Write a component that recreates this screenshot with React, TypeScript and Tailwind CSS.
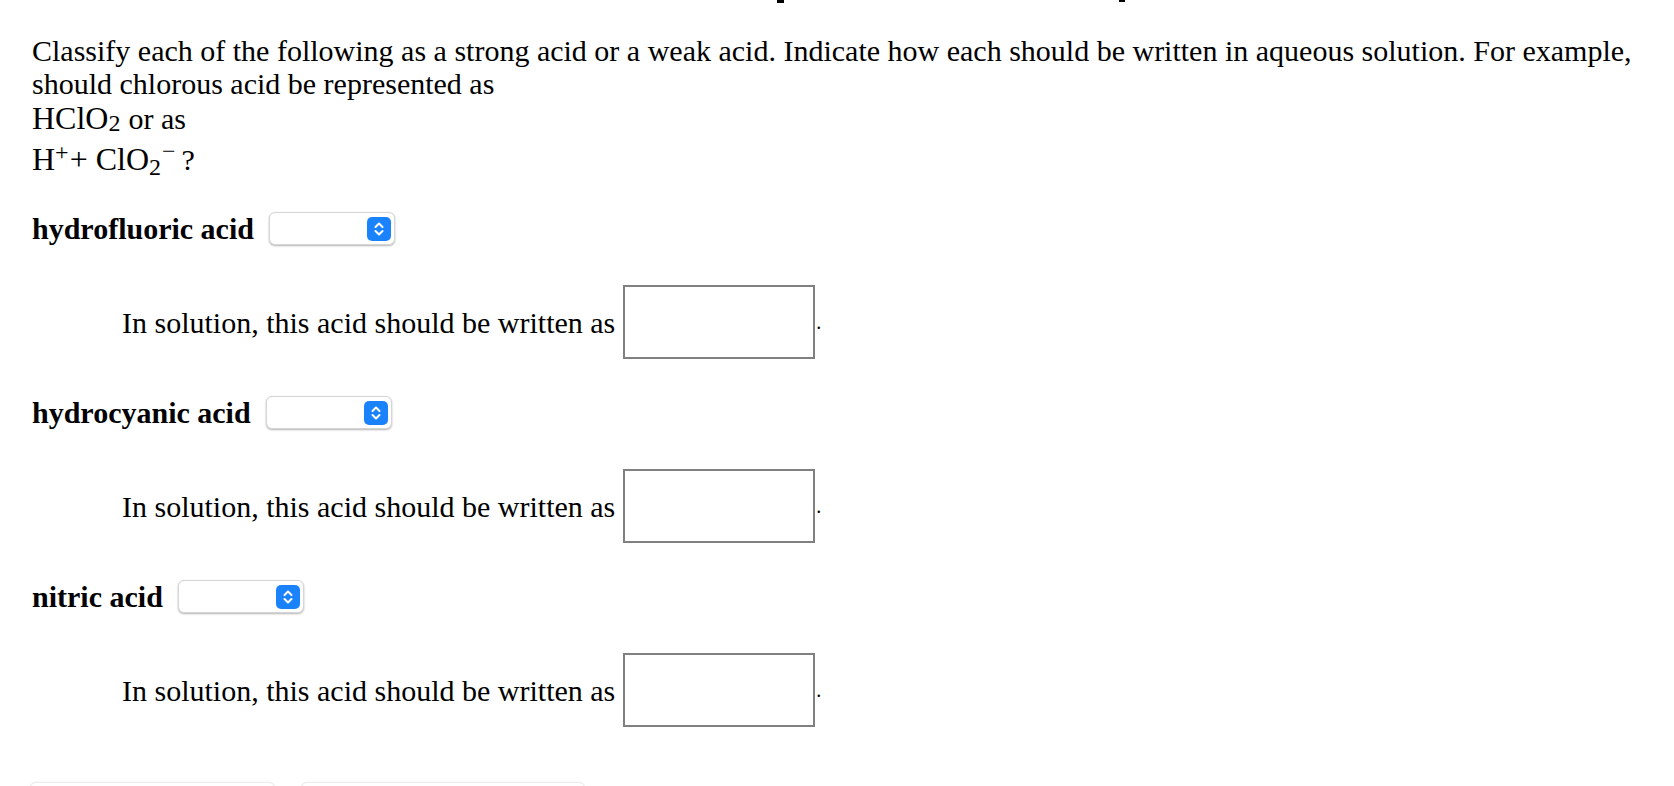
import * as React from 'react';

const acids = ['hydrofluoric acid', 'hydrocyanic acid', 'nitric acid'];

// select in the macOS style: white pill with a blue stepper button
const FakeSelect: React.FC = () => (
  <div className="relative h-[33px] w-[126px] rounded-[6px] border border-[#d6d6d6] bg-white shadow-[0_1px_2px_rgba(0,0,0,0.3)]">
    <div className="absolute right-[3px] top-[4px] flex h-[24px] w-[24px] items-center justify-center rounded-[5px] bg-[#1a82fb]">
      <svg width="12" height="16" viewBox="0 0 12 16" fill="none">
        <path d="M2.5 6 L6 2.5 L9.5 6" stroke="white" strokeWidth="2" strokeLinecap="round" strokeLinejoin="round" />
        <path d="M2.5 10 L6 13.5 L9.5 10" stroke="white" strokeWidth="2" strokeLinecap="round" strokeLinejoin="round" />
      </svg>
    </div>
  </div>
);

const App: React.FC = () => {
  return (
    <div className="relative min-h-[786px] overflow-hidden bg-white font-['Liberation_Serif','Times_New_Roman',serif] text-[30px] text-black">
      {/* bits of the line above that got cut off */}
      <div className="absolute left-[777px] top-0 h-[3px] w-[7px] bg-black" />
      <div className="absolute left-[1119px] top-0 h-[2px] w-[6px] bg-black" />

      <div className="pl-[32px] pt-[34px]">
        <p className="leading-[33px]">
          Classify each of the following as a strong acid or a weak acid. Indicate how each should be written in aqueous solution. For example,
          <br />
          should chlorous acid be represented as
        </p>
        <p className="mt-[1px] text-[32px] leading-[35px]">
          HClO<sub className="relative top-[2px] align-baseline text-[24px]">2</sub>
          <span className="ml-[8px] text-[30px]">or as</span>
        </p>
        <p className="mt-[4px] text-[32px] leading-[38px]">
          H<sup className="relative -top-[10px] align-baseline text-[24px]">+</sup>
          <span className="ml-[1px]">+</span>
          <span className="ml-[8px]">ClO</span>
          <sub className="relative top-[5px] align-baseline text-[24px]">2</sub>
          <sup className="relative -top-[11px] ml-[1px] align-baseline text-[24px]">−</sup>
          <span className="ml-[6px] text-[30px]">?</span>
        </p>

        <div className="mt-[33px] flex flex-col">
          {acids.map((name, i) => (
            <div key={name} className={i === 0 ? '' : 'mt-[37px]'}>
              <div className="flex h-[33px] items-center gap-[15px]">
                <span className="font-bold">{name}</span>
                <FakeSelect />
              </div>
              <div className="mt-[40px] flex h-[74px] items-center pl-[90px]">
                <span>In solution, this acid should be written as</span>
                <div className="ml-[8px] h-[74px] w-[192px] border-2 border-[#808080] bg-white" />
                <span className="ml-[1px] self-center text-[20px]">.</span>
              </div>
            </div>
          ))}
        </div>

        <div className="-ml-[2px] mt-[55px] flex gap-[26px]">
          <div className="h-[44px] w-[245px] rounded-[6px] border border-[#ececec] bg-white shadow-[0_0_2px_rgba(0,0,0,0.08)]" />
          <div className="h-[44px] w-[284px] rounded-[6px] border border-[#ececec] bg-white shadow-[0_0_2px_rgba(0,0,0,0.08)]" />
        </div>
      </div>
    </div>
  );
};

export default App;
